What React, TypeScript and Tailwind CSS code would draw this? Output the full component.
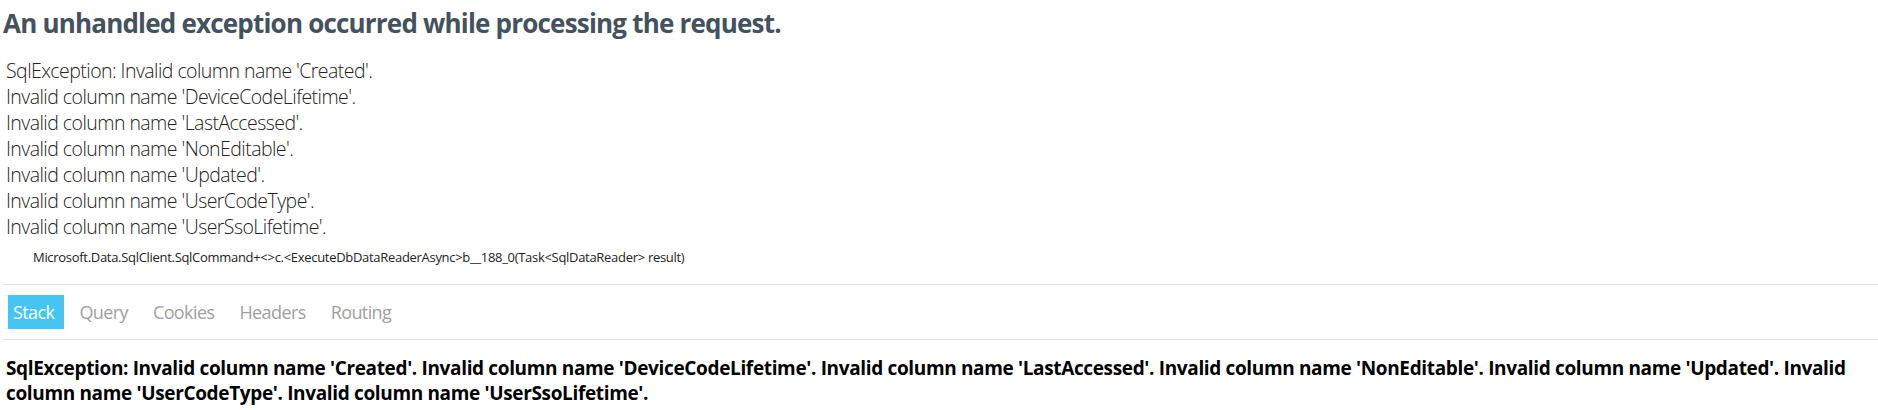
const messages = [
  "SqlException: Invalid column name 'Created'.",
  "Invalid column name 'DeviceCodeLifetime'.",
  "Invalid column name 'LastAccessed'.",
  "Invalid column name 'NonEditable'.",
  "Invalid column name 'Updated'.",
  "Invalid column name 'UserCodeType'.",
  "Invalid column name 'UserSsoLifetime'.",
];

const tabs = ["Stack", "Query", "Cookies", "Headers", "Routing"];

export default function App() {
  return (
    <div className="min-h-screen bg-white pl-[3px] font-['Open_Sans',sans-serif] text-[#222]">
      <h1 className="mt-[6px] mb-[15px] text-[26px] font-bold leading-[34px] tracking-[-0.8px] text-[#44525e]">
        An unhandled exception occurred while processing the request.
      </h1>

      <div className="px-[3px] pt-[3px] pb-[6px] text-[19.5px] font-light leading-[26px] tracking-[-0.55px]">
        {messages.map((line) => (
          <div key={line}>{line}</div>
        ))}
      </div>

      <p className="mt-[3px] ml-[30px] text-[13px] leading-[17px] tracking-[-0.3px]">
        Microsoft.Data.SqlClient.SqlCommand+&lt;&gt;c.&lt;ExecuteDbDataReaderAsync&gt;b__188_0(Task&lt;SqlDataReader&gt; result)
      </p>

      <ul className="mt-[18px] flex h-[56px] items-center gap-[10px] border-y border-[#ddd] pl-[5px] text-[18px] leading-[24px] tracking-[-0.6px]">
        {tabs.map((tab, i) => (
          <li
            className={`cursor-pointer py-[5px] pr-[10px] pl-[5px] ${i === 0 ? "bg-[#44c5f2] text-white" : "text-[#a0a0a0]"}`}
            key={tab}
          >
            {tab}
          </li>
        ))}
      </ul>

      <div className="pt-[16px] pl-[3px] text-[19px] font-bold leading-[25px] tracking-[-0.35px] text-black">
        SqlException: Invalid column name 'Created'. Invalid column name 'DeviceCodeLifetime'. Invalid column name
        'LastAccessed'. Invalid column name 'NonEditable'. Invalid column name 'Updated'. Invalid column name
        'UserCodeType'. Invalid column name 'UserSsoLifetime'.
      </div>
    </div>
  );
}
